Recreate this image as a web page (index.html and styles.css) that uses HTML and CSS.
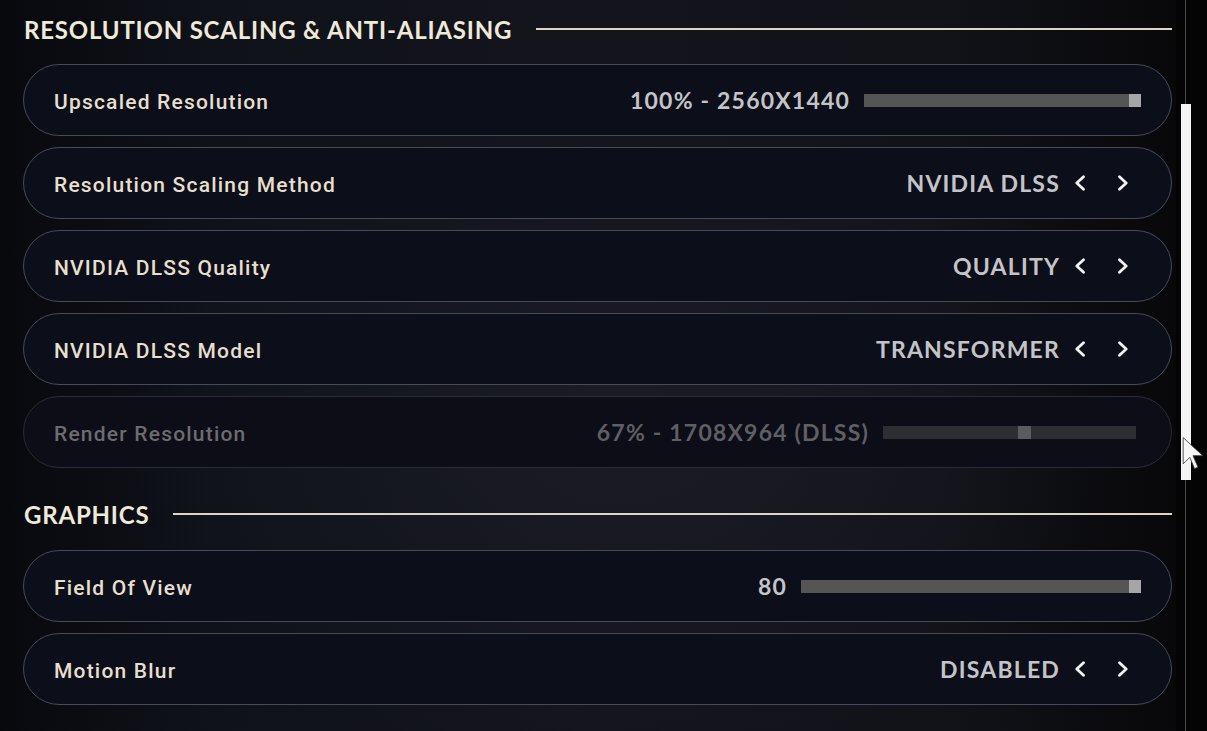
FILE: index.html
```html
<!DOCTYPE html>
<html lang="en">
<head>
<meta charset="utf-8">
<title>Settings</title>
<link rel="stylesheet" href="styles.css">
</head>
<body>
<div class="page">
  <main class="content">
    <div class="section-head"><h2>RESOLUTION SCALING &amp; ANTI-ALIASING</h2><span class="rule"></span></div>
    <div class="row">
      <span class="label">Upscaled Resolution</span>
      <div class="control">
        <span class="value">100% - 2560X1440</span>
        <div class="track w277"><span class="thumb" style="margin-left: calc(100% - 12px)"></span></div>
      </div>
    </div>
    <div class="row">
      <span class="label">Resolution Scaling Method</span>
      <div class="control">
        <span class="value">NVIDIA DLSS</span>
        <div class="arrows">
          <svg class="chev" viewBox="0 0 12 16"><path d="M9.5 1.8 L2.8 8 L9.5 14.2"/></svg>
          <svg class="chev" viewBox="0 0 12 16"><path d="M2.5 1.8 L9.2 8 L2.5 14.2"/></svg>
        </div>
      </div>
    </div>
    <div class="row">
      <span class="label">NVIDIA DLSS Quality</span>
      <div class="control">
        <span class="value">QUALITY</span>
        <div class="arrows">
          <svg class="chev" viewBox="0 0 12 16"><path d="M9.5 1.8 L2.8 8 L9.5 14.2"/></svg>
          <svg class="chev" viewBox="0 0 12 16"><path d="M2.5 1.8 L9.2 8 L2.5 14.2"/></svg>
        </div>
      </div>
    </div>
    <div class="row">
      <span class="label">NVIDIA DLSS Model</span>
      <div class="control">
        <span class="value">TRANSFORMER</span>
        <div class="arrows">
          <svg class="chev" viewBox="0 0 12 16"><path d="M9.5 1.8 L2.8 8 L9.5 14.2"/></svg>
          <svg class="chev" viewBox="0 0 12 16"><path d="M2.5 1.8 L9.2 8 L2.5 14.2"/></svg>
        </div>
      </div>
    </div>
    <div class="row disabled">
      <span class="label">Render Resolution</span>
      <div class="control">
        <span class="value">67% - 1708X964 (DLSS)</span>
        <div class="track w253 inset"><span class="thumb" style="margin-left: 135px"></span></div>
      </div>
    </div>

    <div class="section-head second"><h2>GRAPHICS</h2><span class="rule"></span></div>
    <div class="row">
      <span class="label">Field Of View</span>
      <div class="control">
        <span class="value">80</span>
        <div class="track w340"><span class="thumb" style="margin-left: calc(100% - 12px)"></span></div>
      </div>
    </div>
    <div class="row">
      <span class="label">Motion Blur</span>
      <div class="control">
        <span class="value">DISABLED</span>
        <div class="arrows">
          <svg class="chev" viewBox="0 0 12 16"><path d="M9.5 1.8 L2.8 8 L9.5 14.2"/></svg>
          <svg class="chev" viewBox="0 0 12 16"><path d="M2.5 1.8 L9.2 8 L2.5 14.2"/></svg>
        </div>
      </div>
    </div>
  </main>
  <aside class="scroll">
    <span class="scroll-thumb"></span>
  </aside>
  <svg class="cursor" viewBox="0 0 14 22" width="24" height="36"><path d="M1 1 L1 17 L5 13 L8 20 L10 19 L7 12 L13 12 Z"/></svg>
</div>
</body>
</html>
```

FILE: styles.css
```css
html, body {
  margin: 0;
  padding: 0;
  background: #040405;
}

.page {
  position: relative;
  display: flex;
  width: 1207px;
  height: 731px;
  overflow: hidden;
  background: #040405;
}

.content {
  width: 1176px;
  box-sizing: border-box;
  padding: 9px 4px 0 24px;
  background:
    radial-gradient(ellipse 700px 500px at 620px 420px, rgba(40, 42, 56, 0.35), rgba(0, 0, 0, 0) 70%),
    linear-gradient(90deg, #08090d 0%, #10121a 18%, #13141c 50%, #121319 80%, #08080a 100%);
}

.section-head {
  display: flex;
  align-items: center;
  gap: 24px;
  height: 40px;
  margin-bottom: 15px;
  margin-left: 0;
}

.section-head.second {
  margin-top: 26px;
  margin-bottom: 16px;
}

.section-head h2 {
  margin: 0;
  font-family: "Lato", "Noto Sans", sans-serif;
  font-weight: 700;
  font-size: 24px;
  letter-spacing: 0.8px;
  color: #efe9da;
  white-space: nowrap;
}

.rule {
  flex: 1;
  height: 2px;
  background: #ddd6c3;
}

.row {
  display: flex;
  align-items: center;
  justify-content: space-between;
  height: 72px;
  box-sizing: border-box;
  margin-bottom: 11px;
  margin-left: -1px;
  padding: 0 30px 0 30px;
  border: 1.5px solid #464a59;
  border-radius: 36px;
  background: #0c0e19;
}

.label {
  padding-top: 3px;
  font-family: "Roboto", "Noto Sans", sans-serif;
  font-weight: 500;
  font-size: 21px;
  letter-spacing: 1.2px;
  color: #e6dfce;
}

.control {
  display: flex;
  align-items: center;
}

.value {
  font-family: "Lato", "Noto Sans", sans-serif;
  font-weight: 700;
  font-size: 23px;
  letter-spacing: 1.2px;
  color: #c4c4c8;
  white-space: nowrap;
}

.track {
  display: flex;
  align-items: stretch;
  height: 13px;
  margin-left: 14px;
  background: #555556;
}

.w277 { width: 277px; }
.w340 { width: 340px; }
.w253 { width: 253px; }
.inset { margin-right: 5px; }

.thumb {
  display: block;
  width: 12px;
  background: #a6a6a8;
}

.arrows {
  display: flex;
  align-items: center;
  gap: 31px;
  margin-left: 14px;
  margin-right: 12px;
}

.chev {
  width: 12px;
  height: 16px;
  fill: none;
  stroke: #f2f2f2;
  stroke-width: 2.8;
  stroke-linecap: round;
  stroke-linejoin: round;
}

.row.disabled {
  border-color: #2a2c36;
  background: #0c0d17;
}

.row.disabled .label { color: #6c6c70; }
.row.disabled .value { color: #5f5f64; }
.row.disabled .track { background: #2e2e32; }
.row.disabled .thumb { background: #5b5b5e; width: 13px; }

.scroll {
  width: 10px;
  margin-left: 5px;
  height: 731px;
  background: linear-gradient(90deg, transparent 4px, #4a4a4c 4px, #4a4a4c 5px, transparent 5px);
}

.scroll-thumb {
  display: block;
  width: 10px;
  height: 376px;
  margin-top: 104px;
  background: #f4f4f4;
}

.cursor {
  position: absolute;
  left: 1181px;
  top: 436px;
  fill: #f7f7f7;
  stroke: #3a3a3a;
  stroke-width: 0.5;
}
```
